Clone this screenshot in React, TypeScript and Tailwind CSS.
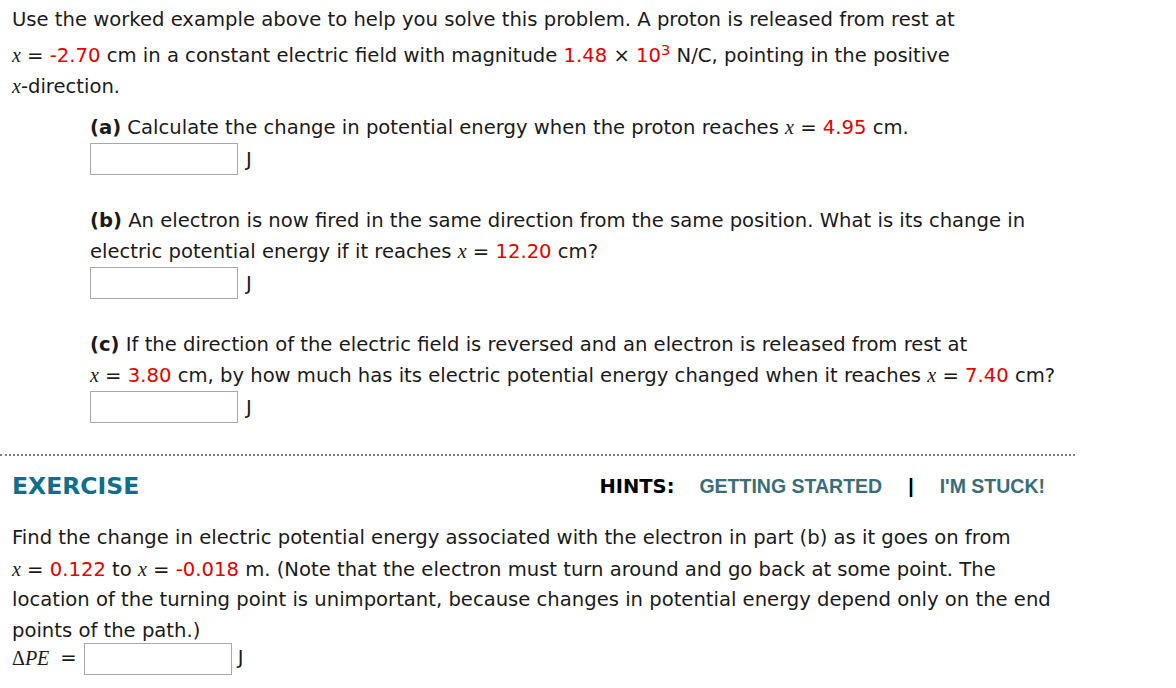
const red = "text-[#e60000]";

function X() {
  return <span className="font-['Liberation_Serif',serif] italic text-[20px]">x</span>;
}

function Num({ children }: { children: React.ReactNode }) {
  return <span className={red}>{children}</span>;
}

function AnswerBox() {
  return (
    <div className="flex items-center h-[32px]">
      <input
        type="text"
        className="w-[148px] h-[32px] border border-[#a9a9a9] bg-white outline-none"
      />
      <span className="ml-[8px]">J</span>
    </div>
  );
}

export default function App() {
  return (
    <div className="bg-white text-[#1a1a1a] font-['DejaVu_Sans',Verdana,sans-serif] text-[19.6px] leading-[31px] w-[1176px] h-[688px] overflow-hidden">
      <div className="pl-[12px] pt-[4px]">
        <div>Use the worked example above to help you solve this problem. A proton is released from rest at</div>
        <div className="pt-[5px]">
          <X /> = <Num>-2.70</Num> cm in a constant electric field with magnitude <Num>1.48</Num> × <Num>10<sup>3</sup></Num> N/C, pointing in the positive
        </div>
        <div><X />-direction.</div>
      </div>

      <div className="pl-[90px] pt-[10px]">
        <div><b>(a)</b> Calculate the change in potential energy when the proton reaches <X /> = <Num>4.95</Num> cm.</div>
        <AnswerBox />

        <div className="pt-[30px]"><b>(b)</b> An electron is now fired in the same direction from the same position. What is its change in</div>
        <div>electric potential energy if it reaches <X /> = <Num>12.20</Num> cm?</div>
        <AnswerBox />

        <div className="pt-[30px]"><b>(c)</b> If the direction of the electric field is reversed and an electron is released from rest at</div>
        <div><X /> = <Num>3.80</Num> cm, by how much has its electric potential energy changed when it reaches <X /> = <Num>7.40</Num> cm?</div>
        <AnswerBox />
      </div>

      <div className="mt-[31px] w-[1075px] border-t-2 border-dotted border-[#808080]" />

      <div className="w-[1075px] flex items-center justify-between pl-[12px] pr-[30px] pt-[11px] h-[51px]">
        <span className="font-bold text-[#0f6f8b] text-[23.5px] leading-none">EXERCISE</span>
        <div className="flex items-center font-bold text-[19.5px] leading-none">
          <span className="text-black">HINTS:</span>
          <span className="ml-[25px] font-['Liberation_Sans',Arial,sans-serif] text-[#3a6d78]">GETTING STARTED</span>
          <span className="ml-[26px] mr-[26px] font-['Liberation_Sans',Arial,sans-serif] text-black">|</span>
          <span className="font-['Liberation_Sans',Arial,sans-serif] text-[#3a6d78]">I'M STUCK!</span>
        </div>
      </div>

      <div className="pl-[12px] pt-[16px] leading-[30.7px]">
        <div>Find the change in electric potential energy associated with the electron in part (b) as it goes on from</div>
        <div><X /> = <Num>0.122</Num> to <X /> = <Num>-0.018</Num> m. (Note that the electron must turn around and go back at some point. The</div>
        <div>location of the turning point is unimportant, because changes in potential energy depend only on the end</div>
        <div>points of the path.)</div>
        <div className="flex items-center h-[32px] -mt-[4px]">
          <span className="font-['Liberation_Serif',serif] text-[20px]">Δ<i>PE</i></span>
          <span className="ml-[11px] mr-[7px]">=</span>
          <input
            type="text"
            className="w-[148px] h-[32px] border border-[#a9a9a9] bg-white outline-none"
          />
          <span className="ml-[6px]">J</span>
        </div>
      </div>
    </div>
  );
}
